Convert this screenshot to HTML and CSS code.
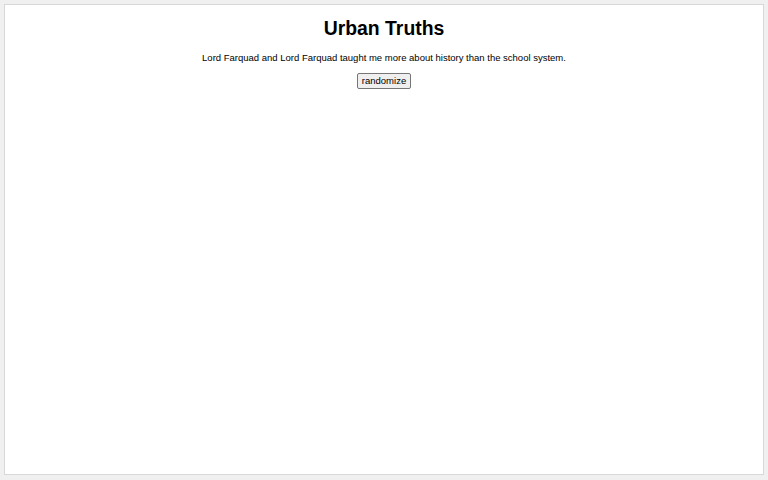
FILE: index.html
```html
<!DOCTYPE html>
<html lang="en">
<head>
  <meta charset="UTF-8" />
  <meta name="viewport" content="width=device-width, initial-scale=1" />
  <title>Urban Truths</title>
  <link rel="stylesheet" href="styles.css">
</head>
<body>
  <div class="panel">
    <h1>Urban Truths</h1>
    <p class="truth" id="truth">Lord Farquad and Lord Farquad taught me more about history than the school system.</p>
    <button type="button" id="randomize">randomize</button>
  </div>
</body>
</html>
```

FILE: styles.css
```css
html, body {
  height: 100%;
}
body {
  margin: 0;
  padding: 4px 4px 5px;
  box-sizing: border-box;
  background: #f0f0f0;
  font-family: "Liberation Sans", Arial, sans-serif;
  color: #000;
}
.panel {
  height: 100%;
  box-sizing: border-box;
  background: #fff;
  border: 1px solid #d8d8d8;
  text-align: center;
  padding-top: 12px;
}
h1 {
  font-size: 19.4px;
  margin: 0 0 12px;
}
.truth {
  font-size: 9.5px;
  margin: 0 0 7px;
}
button {
  font-family: "Liberation Sans", Arial, sans-serif;
  font-size: 9.5px;
  padding: 1px 4px 2px;
  background: #efefef;
  border: 1px solid #767676;
  border-radius: 2px;
  color: #000;
}
```
